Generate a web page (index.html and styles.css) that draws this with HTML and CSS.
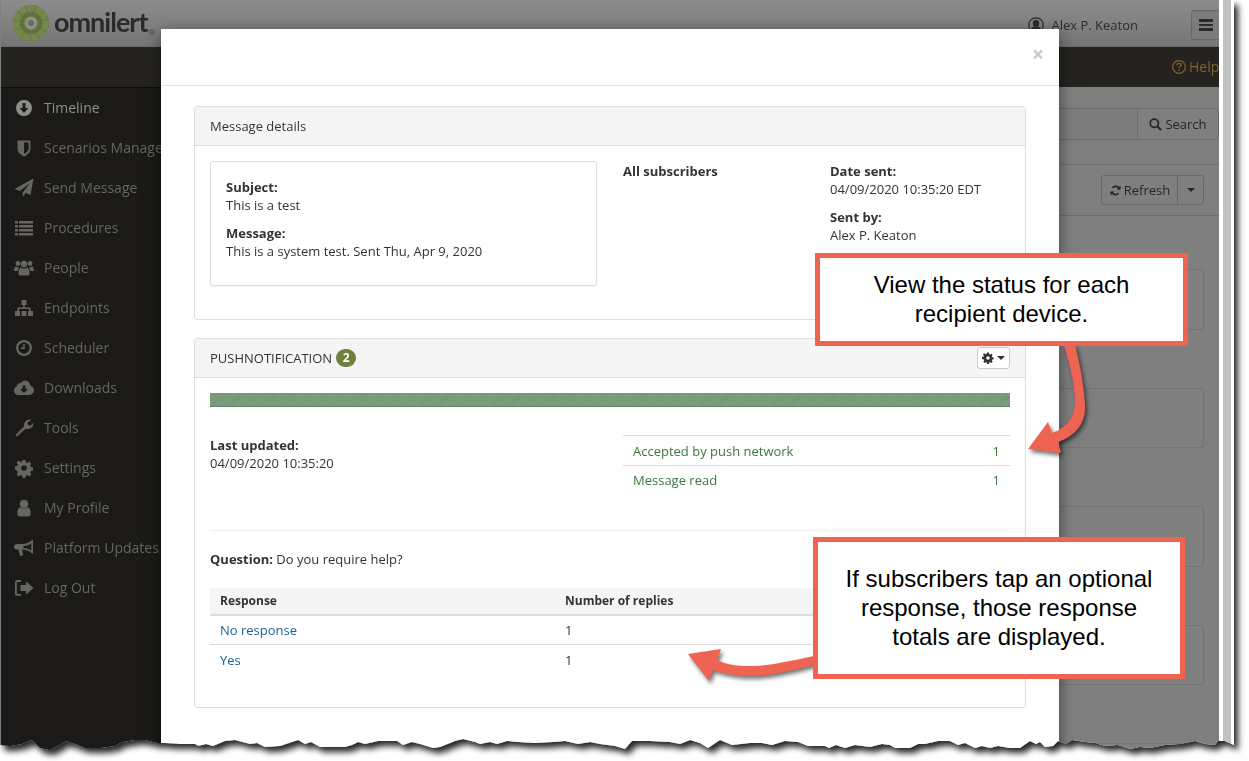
FILE: index.html
```html
<!DOCTYPE html>
<html lang="en">
<head>
<meta charset="utf-8">
<title>Omnilert message details</title>
<link rel="stylesheet" href="styles.css">
</head>
<body>
<div class="frame">
<div class="shot">
  <div class="app">
    <header class="header">
      <div class="logo">
        <svg class="logo-mark" viewBox="0 0 36 36" width="36" height="36">
          <circle cx="18" cy="18" r="18" fill="#66793c"/>
          <circle cx="18" cy="18" r="14.500" fill="none" stroke="#74884a" stroke-width="7" stroke-dasharray="7 1"/>
          <circle cx="18" cy="18" r="9.500" fill="none" stroke="#5c6d42" stroke-width="4" stroke-dasharray="1.500 1"/>
          <circle cx="18" cy="18" r="6.500" fill="#8a9372"/>
          <circle cx="18" cy="18" r="5" fill="#96968e"/>
          <circle cx="18" cy="18" r="3.200" fill="#6d6d6d"/>
          <path d="M18 0V7M18 29V36M0 18H7M29 18H36M5.300 5.300L10 10M30.700 5.300L26 10M5.300 30.700L10 26M30.700 30.700L26 26" stroke="#7b7b7b" stroke-width=".8"/>
        </svg>
        <span class="logo-name">omnilert</span><span class="logo-reg">®</span>
      </div>
      <div class="user">
        <svg viewBox="0 0 16 16" width="16" height="16"><circle cx="8" cy="8" r="7.200" fill="none" stroke="#2b2b2b" stroke-width="1.200"/><circle cx="8" cy="6.200" r="3.200" fill="#2b2b2b"/><path d="M3 13c.6-3 2.400-4 5-4s4.400 1 5 4c-1.300 1.300-3 2-5 2s-3.700-.7-5-2z" fill="#2b2b2b"/></svg>
        <span>Alex P. Keaton</span>
      </div>
      <button class="burger"><i></i><i></i><i></i></button>
    </header>
    <div class="topbar">
      <div class="help">
        <svg viewBox="0 0 14 14" width="14" height="14"><circle cx="7" cy="7" r="6.300" fill="none" stroke="#7f6233" stroke-width="1.200"/><path d="M5 5.300c0-1.300 1-1.900 2-1.900s2 .6 2 1.700c0 1.400-2 1.400-2 3" fill="none" stroke="#7f6233" stroke-width="1.300"/><rect x="6.300" y="9.400" width="1.400" height="1.500" fill="#7f6233"/></svg>
        <span>Help</span>
      </div>
    </div>
    <div class="body">
      <nav class="sidebar">
        <a class="nav-item active"><svg viewBox="0 0 20 20"><path fill-rule="evenodd" d="M10 2a8 8 0 1 1 0 16a8 8 0 0 1 0-16zM8.500 5v5H5.700L10 15l4.300-5h-2.800V5z"/></svg><span>Timeline</span></a>
        <a class="nav-item"><svg viewBox="0 0 20 20"><path fill-rule="evenodd" d="M3.500 2.500h13v8c0 4-3.500 6.500-6.500 8c-3-1.500-6.500-4-6.500-8zM10 4.500v11.500c2.300-1.300 4.700-3 4.700-5.700V4.500z"/></svg><span>Scenarios Manager</span></a>
        <a class="nav-item"><svg viewBox="0 0 20 20"><path d="M19.500 .5L16.500 17l-5-2-2.800 4V14.500L16 5 6 13 .5 11z"/></svg><span>Send Message</span></a>
        <a class="nav-item"><svg viewBox="0 0 20 20"><path d="M1 3h3v2.500H1zM5 3h14v2.500H5zM1 7h3v2.500H1zM5 7h14v2.500H5zM1 11h3v2.500H1zM5 11h14v2.500H5zM1 15h3v2.500H1zM5 15h14v2.500H5z"/></svg><span>Procedures</span></a>
        <a class="nav-item"><svg viewBox="0 0 20 20"><circle cx="4" cy="5.500" r="2.400"/><circle cx="16" cy="5.500" r="2.400"/><circle cx="10" cy="6" r="3.200"/><path d="M0 13c0-3 1-4.500 2.500-4.500 .8.800 2 1 3 .7-1 1-1.400 2-1.500 3.800H0zM20 13c0-3-1-4.500-2.500-4.500-.8.800-2 1-3 .7 1 1 1.400 2 1.500 3.800H20zM4.500 16c0-4 1-6.500 2.800-6.500 1.500 1.300 3.900 1.300 5.400 0 1.800 0 2.800 2.500 2.800 6.500 0 1-1 1.500-2 1.500H6.500c-1 0-2-.5-2-1.500z"/></svg><span>People</span></a>
        <a class="nav-item"><svg viewBox="0 0 20 20"><path d="M7.500 2h5v5h-5zM9.200 7h1.600v3H9.200zM3.500 9.500h13v3.500h-1.600v-2H5.100v2H3.500zM1 13h5v5H1zM7.500 13h5v5h-5zM14 13h5v5h-5z"/></svg><span>Endpoints</span></a>
        <a class="nav-item"><svg viewBox="0 0 20 20"><path fill-rule="evenodd" d="M10 2a8 8 0 1 1 0 16a8 8 0 0 1 0-16zM10 4.300a5.700 5.700 0 1 0 0 11.400a5.700 5.700 0 0 0 0-11.400zM10.700 6v5H6.700v-1.400h2.600V6z"/></svg><span>Scheduler</span></a>
        <a class="nav-item"><svg viewBox="0 0 20 20"><path fill-rule="evenodd" d="M5 17c-2.500 0-5-1.700-5-4.600 0-2 1.200-3.500 2.800-4C3 5.900 5 4.500 7 5c1-1.800 2.700-2.700 4.500-2.500 2.500.2 4.500 2.200 4.600 4.900C18.500 8 20 10 20 12.300c0 2.700-2.200 4.700-5 4.700zM8.500 7.500v3.500H6l4 4 4-4h-2.500V7.500z"/></svg><span>Downloads</span></a>
        <a class="nav-item"><svg viewBox="0 0 20 20"><path d="M3 18.500L1.500 17l8.700-8.700C9.500 5.500 11 2 15.500 1.500c.8 0 1.400.1 2 .4L13.500 4.500l.5 2.500 2.500.8 2.800-3.400c.5 3-1.500 6.600-6 6.600-.8 0-1.400-.1-1.800-.3z"/></svg><span>Tools</span></a>
        <a class="nav-item"><svg viewBox="0 0 20 20"><path fill-rule="evenodd" d="M8.500 2h3l.4 2.300 1.500.6 1.900-1.300 2.100 2.100-1.300 1.900.6 1.500 2.300.4v3l-2.300.4-.6 1.500 1.300 1.900-2.100 2.100-1.900-1.300-1.500.6-.4 2.300h-3l-.4-2.300-1.500-.6-1.900 1.300-2.100-2.100 1.300-1.900-.6-1.500L1 11.500v-3l2.300-.4.600-1.500-1.300-1.900 2.100-2.100 1.900 1.300 1.500-.6zM10 7.200a2.800 2.800 0 1 0 0 5.600a2.800 2.800 0 0 0 0-5.600z"/></svg><span>Settings</span></a>
        <a class="nav-item"><svg viewBox="0 0 20 20"><circle cx="10" cy="6" r="4.300"/><path d="M3.300 16c0-4 1-6.500 3.200-6.800 2 1.700 5 1.700 7 0 2.200.3 3.200 2.800 3.200 6.800 0 1.500-1 2.500-2.500 2.500H5.800c-1.500 0-2.500-1-2.500-2.500z"/></svg><span>My Profile</span></a>
        <a class="nav-item"><svg viewBox="0 0 20 20"><path fill-rule="evenodd" d="M19 2v13.500h-1C15.500 13 12 11.500 8 11.500l1.300 5.700-3.300.8-1.600-6.500H3c-1.600 0-3-1-3-2.800S1.400 6 3 6h5c4 0 7.500-1.500 10-4zM17.300 5.200C15 7 12 8 9.500 8v2c2.500 0 5.500 1 7.800 2.800z"/></svg><span>Platform Updates</span></a>
        <a class="nav-item"><svg viewBox="0 0 20 20"><path d="M7 4H4c-.8 0-1.200.4-1.200 1.200v9.600c0 .8.400 1.200 1.200 1.200h3v1.800H3.500C2 18 1 17 1 15.500v-11C1 3 2 2 3.500 2H7zM12 3.500L19.500 10 12 16.500V13H6.500V7H12z"/></svg><span>Log Out</span></a>
      </nav>
      <main class="main">
        <div class="search-row">
          <div class="search-input"></div>
          <button class="search-btn">
            <svg viewBox="0 0 14 14" width="13" height="13"><circle cx="5.700" cy="5.700" r="4.400" fill="none" stroke="#222" stroke-width="1.800"/><path d="M9 9l4 4" stroke="#222" stroke-width="2.200"/></svg>
            <span>Search</span>
          </button>
        </div>
        <div class="tool-row">
          <div class="btn-group">
            <button class="refresh-btn">
              <svg viewBox="0 0 12 12" width="11" height="11"><path d="M10.500 4.500A4.700 4.700 0 0 0 2.600 3M1.500 7.500A4.700 4.700 0 0 0 9.400 9" fill="none" stroke="#222" stroke-width="1.800"/><path d="M11.500 .8V5H7.300zM.5 11.200V7h4.200z" fill="#222"/></svg>
              <span>Refresh</span>
            </button>
            <button class="caret-btn"><i class="caret"></i></button>
          </div>
        </div>
        <div class="cards">
          <div class="bg-card"></div>
          <div class="bg-card"></div>
          <div class="bg-card"></div>
          <div class="bg-card"></div>
          <div class="bg-card"></div>
        </div>
      </main>
    </div>
  </div>
  <div class="scrollbar"><i></i></div>

  <section class="modal">
    <div class="modal-head"><span class="close">×</span></div>
    <div class="modal-body">
      <div class="panel panel-details">
        <div class="panel-head">Message details</div>
        <div class="details-body">
          <div class="well">
            <p><b>Subject:</b><br>This is a test</p>
            <p><b>Message:</b><br>This is a system test. Sent Thu, Apr 9, 2020</p>
          </div>
          <div class="audience"><b>All subscribers</b></div>
          <div class="sent">
            <p><b>Date sent:</b><br>04/09/2020 10:35:20 EDT</p>
            <p><b>Sent by:</b><br>Alex P. Keaton</p>
          </div>
        </div>
      </div>
      <div class="panel">
        <div class="panel-head push-head">
          <span>PUSHNOTIFICATION</span><span class="badge">2</span>
          <button class="gear-btn">
            <svg viewBox="0 0 20 20" width="12" height="12"><path fill="#333" fill-rule="evenodd" d="M8.500 1h3l.4 2.600 1.700.7 2.100-1.500 2.100 2.100-1.500 2.100.7 1.700 2.600.4v3l-2.600.4-.7 1.700 1.500 2.100-2.100 2.100-2.100-1.500-1.700.7-.4 2.600h-3l-.4-2.600-1.700-.7-2.100 1.500-2.100-2.100 1.500-2.100-.7-1.700L-.1 11.500v-3l2.600-.4.700-1.700-1.500-2.100 2.100-2.100 2.100 1.500 1.700-.7zM10 7a3 3 0 1 0 0 6a3 3 0 0 0 0-6z"/></svg>
            <i class="caret"></i>
          </button>
        </div>
        <div class="push-body">
          <div class="progress"></div>
          <div class="status-row">
            <p class="updated"><b>Last updated:</b><br>04/09/2020 10:35:20</p>
            <div class="status-list">
              <div class="status-item"><span>Accepted by push network</span><span>1</span></div>
              <div class="status-item"><span>Message read</span><span>1</span></div>
            </div>
          </div>
          <hr class="rule">
          <p class="question"><b>Question:</b> Do you require help?</p>
          <table class="replies">
            <thead><tr><th>Response</th><th>Number of replies</th></tr></thead>
            <tbody>
              <tr><td><a>No response</a></td><td>1</td></tr>
              <tr><td><a>Yes</a></td><td>1</td></tr>
            </tbody>
          </table>
        </div>
      </div>
    </div>
  </section>

  <svg class="arrows" viewBox="0 0 1249 761" width="1249" height="761">
    <path fill="#ee6352" d="M1064 345C1070 365 1075 385 1075 402C1075 418 1066 428 1052 433L1048 422L1028 449L1061 453L1058 442C1075 436 1086 424 1085 405C1084 385 1080 365 1075 345Z"/>
    <path fill="#ee6352" d="M814 656C790 661 765 667 747 666C735 666 725 664 717 660L721 649L688 654L709 681L713 670C725 674 738 676 750 676C772 676 793 670 814 665Z"/>
  </svg>

  <div class="callout callout-status">View the status for each recipient device.</div>
  <div class="callout callout-totals">If subscribers tap an optional response, those response totals are displayed.</div>
</div>
</div>
</body>
</html>
```
FILE: styles.css
```css
* { box-sizing: border-box; }
html, body { margin: 0; padding: 0; background: #fff; }
body { width: 1249px; height: 761px; overflow: hidden; font-family: "Open Sans", sans-serif; font-size: 13px; line-height: 18px; color: #333; }
p { margin: 0; }
button { font: inherit; color: inherit; }

.frame { width: 1249px; height: 761px; filter: drop-shadow(4px 5px 3px rgba(0,0,0,.85)); }
.shot {
  position: relative; width: 1234px; height: 761px; display: flex; background: #fff; overflow: hidden;
  clip-path: polygon(0 0, 1234px 0, 1234px 745px, 1225px 741px, 1218px 741px, 1215px 745px, 1205px 744px, 1195px 741px, 1180px 744px, 1165px 745px, 1150px 748px, 1140px 747px, 1130px 749px, 1118px 745px, 1105px 746px, 1095px 743px, 1085px 742px, 1072px 740px, 1066px 744px, 1058px 741px, 1053px 746px, 1045px 747px, 1040px 742px, 1036px 744px, 1030px 741px, 1020px 748px, 1010px 748px, 998px 746px, 990px 748px, 982px 746px, 975px 748px, 965px 743px, 958px 745px, 950px 741px, 938px 741px, 925px 744px, 918px 744px, 910px 748px, 903px 748px, 895px 748px, 890px 745px, 882px 744px, 870px 747px, 855px 745px, 845px 748px, 836px 745px, 829px 748px, 825px 746px, 808px 746px, 798px 742px, 785px 741px, 772px 745px, 762px 743px, 750px 743px, 732px 745px, 720px 740px, 708px 748px, 700px 743px, 690px 740px, 680px 744px, 670px 742px, 650px 741px, 632px 741px, 625px 749px, 615px 746px, 600px 744px, 590px 742px, 578px 744px, 565px 741px, 553px 742px, 535px 743px, 518px 742px, 507px 741px, 497px 744px, 490px 742px, 480px 744px, 475px 742px, 463px 739px, 455px 741px, 440px 747px, 433px 748px, 420px 744px, 412px 742px, 403px 745px, 397px 741px, 378px 741px, 365px 744px, 358px 742px, 352px 745px, 345px 747px, 320px 747px, 311px 742px, 305px 744px, 298px 740px, 280px 746px, 265px 747px, 257px 743px, 250px 744px, 235px 740px, 225px 741px, 213px 746px, 206px 744px, 198px 746px, 195px 744px, 180px 744px, 165px 743px, 158px 743px, 145px 740px, 135px 740px, 122px 742px, 115px 746px, 100px 748px, 85px 748px, 78px 745px, 66px 741px, 58px 746px, 50px 750px, 40px 748px, 32px 740px, 22px 744px, 10px 746px, 0 745px);
}
.app { width: 1219px; height: 761px; display: flex; flex-direction: column; background: #7f7f7f; flex: none; border-left: 1px solid #7f7f7f; }
.scrollbar { flex: none; width: 15px; padding: 0 3px 0 4px; background: #fff; }
.scrollbar i { display: block; width: 8px; height: 100%; background: #c2c2c2; }

.header { height: 47px; flex: none; display: flex; align-items: center; background: linear-gradient(#8c8c8c, #767676); border-bottom: 1px solid #6f6f6f; }
.logo { display: flex; align-items: center; padding-left: 12px; }
.logo-mark { flex: none; }
.logo-name { margin: 0 0 2px 5px; font-family: Lato, sans-serif; font-weight: 700; font-size: 27px; line-height: 36px; color: #2a2a2a; letter-spacing: -1px; }
.logo-reg { align-self: flex-end; font-size: 8px; line-height: 14px; margin: 0 0 3px 1px; color: #444; }
.user { margin: 4px 0 0 auto; display: flex; align-items: center; gap: 7px; color: #2b2b2b; }
.burger { margin: 4px 0 0 53px; width: 28px; height: 30px; padding: 0 0 0 7px; display: flex; flex-direction: column; justify-content: center; gap: 2px; background: #7c7c7c; border: 1px solid #676767; border-right: 0; border-radius: 3px 0 0 3px; }
.burger i { display: block; width: 14px; height: 2.500px; background: #2a2a2a; }

.topbar { height: 40px; flex: none; display: flex; justify-content: flex-end; align-items: center; background: #24231f; }
.help { display: flex; align-items: center; gap: 3px; color: #7f6233; font-size: 14px; width: 47px; overflow: hidden; white-space: nowrap; flex: none; }
.help svg { flex: none; }

.body { flex: 1; display: flex; min-height: 0; }
.sidebar { width: 200px; flex: none; background: #1b1a18; border-top: 1px solid #0d0d0c; white-space: nowrap; overflow: hidden; }
.nav-item { height: 40px; display: flex; align-items: center; gap: 10px; padding-left: 13px; font-size: 14px; color: #666563; }
.nav-item svg { width: 20px; height: 20px; flex: none; fill: #666563; }
.nav-item.active { color: #8f8e8c; }
.nav-item.active svg { fill: #8f8e8c; }

.main { flex: 1; padding: 21px 15px 0 0; }
.search-row { display: flex; height: 32px; margin-right: -15px; border: 1px solid #6c6c6c; border-radius: 0 3px 3px 0; background: #7f7f7f; }
.search-input { flex: 1; background: #7d7d7d; }
.search-btn { width: 81px; flex: none; display: flex; align-items: center; justify-content: center; gap: 3px; padding: 0; background: #7f7f7f; border: 0; border-left: 1px solid #6c6c6c; color: #252525; }
.tool-row { margin: 24px -15px 0 0; padding: 10px 15px 10px 0; display: flex; justify-content: flex-end; border-top: 1px solid #6f6f6f; border-bottom: 1px solid #6f6f6f; }
.btn-group { display: flex; height: 30px; border: 1px solid #676767; border-radius: 3px; }
.refresh-btn { width: 75px; display: flex; align-items: center; justify-content: center; gap: 3px; padding: 0 0 0 1px; background: transparent; border: 0; color: #252525; }
.caret-btn { width: 26px; padding: 0; display: flex; align-items: center; justify-content: center; background: transparent; border: 0; border-left: 1px solid #676767; color: #252525; }
.caret { display: inline-block; width: 0; height: 0; border-top: 4px solid currentColor; border-left: 4px solid transparent; border-right: 4px solid transparent; }
.cards { margin-top: 53px; display: flex; flex-direction: column; gap: 58px; }
.bg-card { height: 60.500px; flex: none; border: 1px solid #737373; border-radius: 2px; }

.modal { position: absolute; left: 161px; top: 29px; width: 898px; height: 760px; background: #fff; box-shadow: 0 5px 15px rgba(0,0,0,.5); }
.modal-head { height: 57px; padding: 12px 15px 0 0; text-align: right; border-bottom: 1px solid #e5e5e5; }
.close { font-size: 21px; line-height: 26px; font-weight: 700; color: #c8c8c8; }
.modal-body { padding: 20px 33px 0; }
.panel { border: 1px solid #ddd; border-radius: 3px; background: #fff; }
.panel-head { height: 39px; padding: 0 15px; display: flex; align-items: center; background: #f5f5f5; border-bottom: 1px solid #ddd; color: #333; }
.panel-details { height: 214px; margin-bottom: 18px; }
.details-body { padding: 15px; display: flex; }
.well { width: 387px; height: 125px; padding: 16px 15px; flex: none; border: 1px solid #ddd; border-radius: 3px; box-shadow: 0 1px 1px rgba(0,0,0,.05); }
.well p + p { margin-top: 10px; }
.audience { width: 233px; flex: none; padding: 1px 0 0 26px; }
.sent { padding-top: 1px; }
.sent p + p { margin-top: 10px; }

.badge { margin-left: 4px; width: 20px; height: 18px; border-radius: 10px; background: #6e7f3e; color: #fff; font-size: 12px; font-weight: 700; line-height: 18px; text-align: center; }
.gear-btn { margin-left: auto; width: 33px; height: 22px; padding: 0; display: flex; align-items: center; justify-content: center; gap: 3px; background: #fff; border: 1px solid #ccc; border-radius: 3px; color: #333; }
.gear-btn svg { flex: none; }

.push-body { padding: 15px 15px 0; height: 329px; }
.progress { height: 14px; background-color: #7b9d7b; background-image: repeating-linear-gradient(135deg, rgba(0,0,0,.05) 0 1px, transparent 1px 3px); border-bottom: 1px solid #5f8560; }
.status-row { display: flex; margin-top: 28px; }
.updated { width: 413px; flex: none; padding-top: 1px; }
.status-list { flex: 1; }
.status-item { height: 30px; padding: 0 10px; display: flex; align-items: center; justify-content: space-between; border-top: 1px solid #ddd; color: #3c763d; }
.status-item + .status-item { height: 29px; }
.rule { margin: 36px 0 0; border: 0; border-top: 1px solid #eee; }
.question { margin-top: 19px; }
.replies { width: 100%; margin-top: 20px; border-collapse: collapse; table-layout: fixed; }
.replies th { height: 27px; padding: 0 10px; text-align: left; font-size: 12px; font-weight: 700; background: #f5f5f5; border-bottom: 2px solid #ddd; }
.replies th:first-child { width: 345px; }
.replies td { height: 29px; padding: 1px 10px 0; }
.replies tr + tr td { height: 31px; padding-top: 0; border-top: 1px solid #ddd; }
.replies a { color: #1a6496; }

.arrows { position: absolute; left: 0; top: 0; pointer-events: none; filter: drop-shadow(2px 3px 2px rgba(0,0,0,.55)); }
.callout { position: absolute; padding: 0 15px 2px; display: flex; align-items: center; justify-content: center; text-align: center; font-family: "Liberation Sans", Arial, sans-serif; font-size: 24px; line-height: 29px; color: #000; background: #fff; border: 5px solid #ee6352; }
.callout-status { left: 815px; top: 253px; width: 373px; height: 93px; }
.callout-totals { left: 813px; top: 537px; width: 372px; height: 142px; }
```
